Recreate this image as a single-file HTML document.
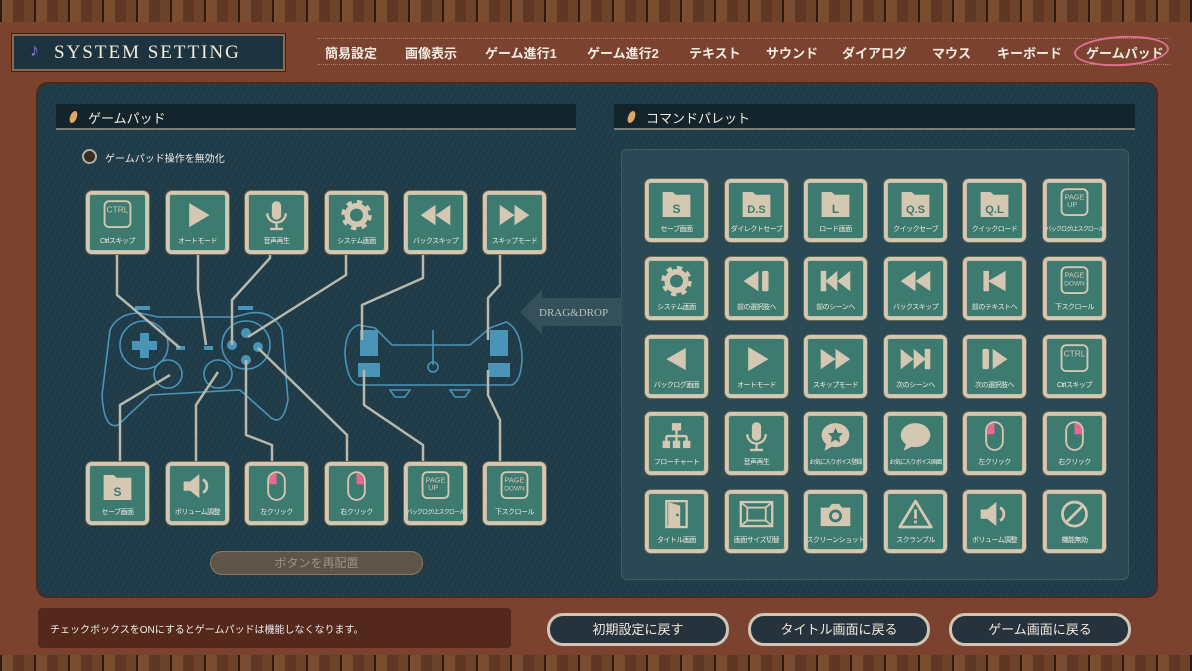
<!DOCTYPE html>
<html><head><meta charset="utf-8">
<style>
*{margin:0;padding:0;box-sizing:border-box}
body{width:1192px;height:671px;overflow:hidden;background:#7b4230;font-family:"Liberation Sans","Noto Sans CJK JP",sans-serif;position:relative}
.wood{position:absolute;left:0;width:1192px;background:repeating-linear-gradient(90deg,#2e1a10 0 2px,#7a4c30 2px 13px,#5e3822 13px 24px,#6c4229 24px 34px);}
.abs{position:absolute}
.title{left:12px;top:34px;width:273px;height:37px;background:#1d3440;border:2px solid #8a6a48;box-shadow:0 0 0 1px #3a2418;color:#f2ece0;font-family:"Liberation Serif",serif;font-size:19px;letter-spacing:2px;padding:6px 0 0 40px}
.nav{top:43px;font-size:13px;font-weight:bold;color:#f4ece2;white-space:nowrap}
.dot{left:318px;width:852px;height:0;border-top:1px dotted #b07a64}
.panel{left:38px;top:84px;width:1118px;height:512px;background:repeating-linear-gradient(120deg,#1f3b47 0 3px,#223f4b 3px 5px);border-radius:10px;box-shadow:0 0 0 2px #4a2a1e}
.hdr{height:26px;background:#14242c;color:#f0ebe0;font-size:13px;padding:4px 0 0 32px;border-bottom:2px solid #76807a}
.hdr i{position:absolute;left:14px;top:7px;width:7px;height:12px;background:#e3a66a;border-radius:50%;transform:skewX(-15deg)}
.pal{left:621px;top:149px;width:508px;height:431px;background:#2a4954;border:1px solid #3d5c66;border-radius:6px}
.b{position:absolute;width:63px;height:63px;background:#3d7a70;border:3px solid #d4c8b2;border-radius:6px;box-shadow:0 0 0 1px #6a6a5a,inset 0 0 0 1px #c8bca6}
.b svg{position:absolute;left:10px;top:4px;width:37px;height:36px}
.b span{position:absolute;left:-4px;right:-4px;top:42px;text-align:center;font-size:7px;color:#f0ebe2;white-space:nowrap;letter-spacing:-.5px}
.b span.s{font-size:6px;letter-spacing:-.8px}
.btm{top:613px;width:182px;height:33px;background:#26323c;border:3px solid #cfc6b6;border-radius:16px;color:#f0ebe0;font-size:13px;text-align:center;line-height:27px}
</style></head><body>
<div class="wood abs" style="top:0;height:22px"></div>
<div class="wood abs" style="top:655px;height:16px"></div>
<div class="abs title">SYSTEM SETTING<span style="position:absolute;left:16px;top:4px;font-size:18px;color:#8a7ad8">♪</span></div>
<div class="abs dot" style="top:38px"></div><div class="abs dot" style="top:64px"></div>
<div class="abs nav" style="left:325px">簡易設定</div>
<div class="abs nav" style="left:405px">画像表示</div>
<div class="abs nav" style="left:485px">ゲーム進行1</div>
<div class="abs nav" style="left:587px">ゲーム進行2</div>
<div class="abs nav" style="left:689px">テキスト</div>
<div class="abs nav" style="left:766px">サウンド</div>
<div class="abs nav" style="left:842px">ダイアログ</div>
<div class="abs nav" style="left:932px">マウス</div>
<div class="abs nav" style="left:997px">キーボード</div>
<div class="abs nav" style="left:1086px">ゲームパッド</div>
<div class="abs" style="left:1074px;top:36px;width:95px;height:30px;border:2px solid #e07090;border-radius:50%;transform:rotate(-3deg)"></div>

<div class="abs panel"></div>
<div class="abs hdr" style="left:56px;top:104px;width:520px"><i></i>ゲームパッド</div>
<div class="abs hdr" style="left:614px;top:104px;width:521px"><i></i>コマンドパレット</div>
<div class="abs" style="left:82px;top:149px;width:15px;height:15px;border-radius:50%;background:#3a2a24;border:2px solid #b0b0a0"></div>
<div class="abs" style="left:105px;top:150px;font-size:10px;color:#eee">ゲームパッド操作を無効化</div>
<div class="abs pal"></div>

<svg class="abs" style="left:520px;top:290px" width="102" height="44"><polygon points="0,22 22,0 22,8 102,8 102,36 22,36 22,44" fill="#34505a"/><text x="19" y="26" font-family="Liberation Serif,serif" font-size="11" fill="#b8c0c0">DRAG&amp;DROP</text></svg>

<svg class="abs" style="left:0;top:0" width="1192" height="671">
<g fill="none" stroke="#4a94b8" stroke-width="1.6">
<path d="M140,313 Q118,313 110,330 L102,395 Q104,430 118,425 L150,395 L240,390 L268,415 Q282,430 288,400 L282,330 Q272,310 250,313 L234,317 L158,317 Z"/>
<circle cx="144" cy="345" r="24"/><circle cx="168" cy="374" r="14"/><circle cx="218" cy="374" r="14"/><circle cx="246" cy="345" r="24"/>
<path d="M358,325 Q345,330 345,355 Q348,385 360,385 L512,385 Q522,380 522,355 Q520,328 506,322 L490,328 L470,345 L392,345 L375,328 Z"/>
<path d="M390,390 L410,390 L405,397 L395,397 Z M450,390 L470,390 L465,397 L455,397 Z"/>
<path d="M433,330 L433,365"/><circle cx="433" cy="367" r="5"/>
</g>
<g fill="#4a94b8">
<path d="M140,333h9v8h8v9h-8v8h-9v-8h-8v-9h8z"/>
<rect x="176" y="346" width="9" height="4"/><rect x="204" y="346" width="9" height="4"/>
<circle cx="232" cy="345" r="5"/><circle cx="246" cy="333" r="5"/><circle cx="258" cy="347" r="5"/><circle cx="246" cy="360" r="5"/>
<rect x="135" y="306" width="15" height="4"/><rect x="238" y="306" width="15" height="4"/>
<rect x="360" y="330" width="18" height="26"/><rect x="490" y="330" width="18" height="26"/>
<rect x="358" y="363" width="22" height="14"/><rect x="488" y="363" width="22" height="14"/>
</g>
<g fill="none" stroke="#b8b8ac" stroke-width="2.5" stroke-linejoin="round">
<path d="M117,254V295L180,348"/><path d="M198,254V290L206,345"/><path d="M270,254V258L232,300V345"/>
<path d="M346,254V275L248,337"/><path d="M423,254V278L362,305V340"/><path d="M500,254V285L488,298V340"/>
<path d="M120,462V405L170,375"/><path d="M196,462V405L218,372"/><path d="M272,462V445L246,435V360"/>
<path d="M347,462V435L258,348"/><path d="M423,462V445L364,405V370"/><path d="M500,462V420L488,395V370"/>
</g>
</svg>

<div class="b" style="left:86px;top:191px"><svg viewBox="0 0 40 36"><rect x="6" y="2" width="28" height="28" rx="5" fill="none" stroke="#d4c8b2" stroke-width="2"/><text x="20" y="14" font-size="9" fill="#d4c8b2" text-anchor="middle">CTRL</text></svg><span>Ctrlスキップ</span></div>
<div class="b" style="left:166px;top:191px"><svg viewBox="0 0 40 36"><polygon points="11,4 33,17 11,30" fill="#d4c8b2"/></svg><span>オートモード</span></div>
<div class="b" style="left:245px;top:191px"><svg viewBox="0 0 40 36"><rect x="15" y="2" width="10" height="20" rx="5" fill="#d4c8b2"/><path d="M10,15a10,10 0 0 0 20,0M20,25v6M13,32h14" stroke="#d4c8b2" stroke-width="2.5" fill="none"/></svg><span>音声再生</span></div>
<div class="b" style="left:325px;top:191px"><svg viewBox="0 0 40 36"><circle cx="20" cy="17" r="10" fill="none" stroke="#d4c8b2" stroke-width="6"/><circle cx="20" cy="17" r="14" fill="none" stroke="#d4c8b2" stroke-width="5" stroke-dasharray="5.5 5.5"/></svg><span>システム画面</span></div>
<div class="b" style="left:404px;top:191px"><svg viewBox="0 0 40 36"><polygon points="20,6 20,28 4,17" fill="#d4c8b2"/><polygon points="36,6 36,28 20,17" fill="#d4c8b2"/></svg><span>バックスキップ</span></div>
<div class="b" style="left:483px;top:191px"><svg viewBox="0 0 40 36"><polygon points="4,6 4,28 20,17" fill="#d4c8b2"/><polygon points="20,6 20,28 36,17" fill="#d4c8b2"/></svg><span>スキップモード</span></div>
<div class="b" style="left:86px;top:462px"><svg viewBox="0 0 40 36"><path d="M5,5h11l3,3h16v24h-30z" fill="#d4c8b2"/><text x="20" y="28" font-size="13" font-weight="bold" fill="#3d7a70" text-anchor="middle">S</text></svg><span>セーブ画面</span></div>
<div class="b" style="left:166px;top:462px"><svg viewBox="0 0 40 36"><polygon points="5,12 12,12 22,4 22,30 12,22 5,22" fill="#d4c8b2"/><path d="M26,10a8,8 0 0 1 0,14" stroke="#d4c8b2" stroke-width="3" fill="none"/></svg><span>ボリューム調整</span></div>
<div class="b" style="left:245px;top:462px"><svg viewBox="0 0 40 36"><rect x="11" y="2" width="18" height="30" rx="9" fill="none" stroke="#d4c8b2" stroke-width="2"/><path d="M12,11a8,9 0 0 1 8,-8v12h-8z" fill="#e86890"/></svg><span>左クリック</span></div>
<div class="b" style="left:325px;top:462px"><svg viewBox="0 0 40 36"><rect x="11" y="2" width="18" height="30" rx="9" fill="none" stroke="#d4c8b2" stroke-width="2"/><path d="M28,11a8,9 0 0 0 -8,-8v12h8z" fill="#e86890"/></svg><span>右クリック</span></div>
<div class="b" style="left:404px;top:462px"><svg viewBox="0 0 40 36"><rect x="6" y="2" width="28" height="28" rx="5" fill="none" stroke="#d4c8b2" stroke-width="2"/><text x="20" y="13" font-size="8" fill="#d4c8b2" text-anchor="middle">PAGE</text><text x="12" y="21" font-size="8" fill="#d4c8b2">UP</text></svg><span class="s">バックログ/上スクロール</span></div>
<div class="b" style="left:483px;top:462px"><svg viewBox="0 0 40 36"><rect x="6" y="2" width="28" height="28" rx="5" fill="none" stroke="#d4c8b2" stroke-width="2"/><text x="20" y="13" font-size="8" fill="#d4c8b2" text-anchor="middle">PAGE</text><text x="20" y="22" font-size="7" fill="#d4c8b2" text-anchor="middle">DOWN</text></svg><span>下スクロール</span></div>

<div class="abs" style="left:210px;top:551px;width:213px;height:24px;background:#5e5448;border:1px solid #8a7a62;border-radius:12px;color:#9a9488;font-size:12px;text-align:center;line-height:22px">ボタンを再配置</div>

<div class="b" style="left:645px;top:179px"><svg viewBox="0 0 40 36"><path d="M5,5h11l3,3h16v24h-30z" fill="#d4c8b2"/><text x="20" y="28" font-size="13" font-weight="bold" fill="#3d7a70" text-anchor="middle">S</text></svg><span>セーブ画面</span></div>
<div class="b" style="left:725px;top:179px"><svg viewBox="0 0 40 36"><path d="M5,5h11l3,3h16v24h-30z" fill="#d4c8b2"/><text x="20" y="28" font-size="12" font-weight="bold" fill="#3d7a70" text-anchor="middle">D.S</text></svg><span>ダイレクトセーブ</span></div>
<div class="b" style="left:804px;top:179px"><svg viewBox="0 0 40 36"><path d="M5,5h11l3,3h16v24h-30z" fill="#d4c8b2"/><text x="20" y="28" font-size="13" font-weight="bold" fill="#3d7a70" text-anchor="middle">L</text></svg><span>ロード画面</span></div>
<div class="b" style="left:884px;top:179px"><svg viewBox="0 0 40 36"><path d="M5,5h11l3,3h16v24h-30z" fill="#d4c8b2"/><text x="20" y="28" font-size="12" font-weight="bold" fill="#3d7a70" text-anchor="middle">Q.S</text></svg><span>クイックセーブ</span></div>
<div class="b" style="left:963px;top:179px"><svg viewBox="0 0 40 36"><path d="M5,5h11l3,3h16v24h-30z" fill="#d4c8b2"/><text x="20" y="28" font-size="12" font-weight="bold" fill="#3d7a70" text-anchor="middle">Q.L</text></svg><span>クイックロード</span></div>
<div class="b" style="left:1043px;top:179px"><svg viewBox="0 0 40 36"><rect x="6" y="2" width="28" height="28" rx="5" fill="none" stroke="#d4c8b2" stroke-width="2"/><text x="20" y="13" font-size="8" fill="#d4c8b2" text-anchor="middle">PAGE</text><text x="12" y="21" font-size="8" fill="#d4c8b2">UP</text></svg><span class="s">バックログ/上スクロール</span></div>
<div class="b" style="left:645px;top:257px"><svg viewBox="0 0 40 36"><circle cx="20" cy="17" r="10" fill="none" stroke="#d4c8b2" stroke-width="6"/><circle cx="20" cy="17" r="14" fill="none" stroke="#d4c8b2" stroke-width="5" stroke-dasharray="5.5 5.5"/></svg><span>システム画面</span></div>
<div class="b" style="left:725px;top:257px"><svg viewBox="0 0 40 36"><polygon points="22,6 22,28 6,17" fill="#d4c8b2"/><rect x="26" y="6" width="7" height="22" rx="2" fill="#d4c8b2"/></svg><span>前の選択肢へ</span></div>
<div class="b" style="left:804px;top:257px"><svg viewBox="0 0 40 36"><rect x="4" y="6" width="6" height="22" fill="#d4c8b2"/><polygon points="22,6 22,28 9,17" fill="#d4c8b2"/><polygon points="36,6 36,28 22,17" fill="#d4c8b2"/></svg><span>前のシーンへ</span></div>
<div class="b" style="left:884px;top:257px"><svg viewBox="0 0 40 36"><polygon points="20,6 20,28 4,17" fill="#d4c8b2"/><polygon points="36,6 36,28 20,17" fill="#d4c8b2"/></svg><span>バックスキップ</span></div>
<div class="b" style="left:963px;top:257px"><svg viewBox="0 0 40 36"><rect x="8" y="6" width="6" height="22" fill="#d4c8b2"/><polygon points="32,6 32,28 13,17" fill="#d4c8b2"/></svg><span>前のテキストへ</span></div>
<div class="b" style="left:1043px;top:257px"><svg viewBox="0 0 40 36"><rect x="6" y="2" width="28" height="28" rx="5" fill="none" stroke="#d4c8b2" stroke-width="2"/><text x="20" y="13" font-size="8" fill="#d4c8b2" text-anchor="middle">PAGE</text><text x="20" y="22" font-size="7" fill="#d4c8b2" text-anchor="middle">DOWN</text></svg><span>下スクロール</span></div>
<div class="b" style="left:645px;top:335px"><svg viewBox="0 0 40 36"><polygon points="30,5 30,29 9,17" fill="#d4c8b2"/></svg><span>バックログ画面</span></div>
<div class="b" style="left:725px;top:335px"><svg viewBox="0 0 40 36"><polygon points="11,4 33,17 11,30" fill="#d4c8b2"/></svg><span>オートモード</span></div>
<div class="b" style="left:804px;top:335px"><svg viewBox="0 0 40 36"><polygon points="4,6 4,28 20,17" fill="#d4c8b2"/><polygon points="20,6 20,28 36,17" fill="#d4c8b2"/></svg><span>スキップモード</span></div>
<div class="b" style="left:884px;top:335px"><svg viewBox="0 0 40 36"><polygon points="4,6 4,28 18,17" fill="#d4c8b2"/><polygon points="18,6 18,28 31,17" fill="#d4c8b2"/><rect x="30" y="6" width="6" height="22" fill="#d4c8b2"/></svg><span>次のシーンへ</span></div>
<div class="b" style="left:963px;top:335px"><svg viewBox="0 0 40 36"><rect x="7" y="6" width="7" height="22" rx="2" fill="#d4c8b2"/><polygon points="18,6 18,28 34,17" fill="#d4c8b2"/></svg><span>次の選択肢へ</span></div>
<div class="b" style="left:1043px;top:335px"><svg viewBox="0 0 40 36"><rect x="6" y="2" width="28" height="28" rx="5" fill="none" stroke="#d4c8b2" stroke-width="2"/><text x="20" y="14" font-size="9" fill="#d4c8b2" text-anchor="middle">CTRL</text></svg><span>Ctrlスキップ</span></div>
<div class="b" style="left:645px;top:412px"><svg viewBox="0 0 40 36"><rect x="15" y="3" width="10" height="8" fill="#d4c8b2"/><path d="M20,11v6M9,17h22M9,17v6M20,17v6M31,17v6" stroke="#d4c8b2" stroke-width="2.5" fill="none"/><rect x="5" y="22" width="8" height="8" fill="#d4c8b2"/><rect x="16" y="22" width="8" height="8" fill="#d4c8b2"/><rect x="27" y="22" width="8" height="8" fill="#d4c8b2"/></svg><span>フローチャート</span></div>
<div class="b" style="left:725px;top:412px"><svg viewBox="0 0 40 36"><rect x="15" y="2" width="10" height="20" rx="5" fill="#d4c8b2"/><path d="M10,15a10,10 0 0 0 20,0M20,25v6M13,32h14" stroke="#d4c8b2" stroke-width="2.5" fill="none"/></svg><span>音声再生</span></div>
<div class="b" style="left:804px;top:412px"><svg viewBox="0 0 40 36"><ellipse cx="20" cy="16" rx="15" ry="13" fill="#d4c8b2"/><polygon points="10,25 8,33 17,28" fill="#d4c8b2"/><polygon points="20,8 22.5,13.5 28,14 24,18 25,24 20,21 15,24 16,18 12,14 17.5,13.5" fill="#3d7a70"/></svg><span class="s">お気に入りボイス登録</span></div>
<div class="b" style="left:884px;top:412px"><svg viewBox="0 0 40 36"><ellipse cx="20" cy="16" rx="16" ry="13" fill="#d4c8b2"/><polygon points="10,25 7,33 17,28" fill="#d4c8b2"/></svg><span class="s">お気に入りボイス画面</span></div>
<div class="b" style="left:963px;top:412px"><svg viewBox="0 0 40 36"><rect x="11" y="2" width="18" height="30" rx="9" fill="none" stroke="#d4c8b2" stroke-width="2"/><path d="M12,11a8,9 0 0 1 8,-8v12h-8z" fill="#e86890"/></svg><span>左クリック</span></div>
<div class="b" style="left:1043px;top:412px"><svg viewBox="0 0 40 36"><rect x="11" y="2" width="18" height="30" rx="9" fill="none" stroke="#d4c8b2" stroke-width="2"/><path d="M28,11a8,9 0 0 0 -8,-8v12h8z" fill="#e86890"/></svg><span>右クリック</span></div>
<div class="b" style="left:645px;top:490px"><svg viewBox="0 0 40 36"><rect x="9" y="3" width="22" height="28" fill="none" stroke="#d4c8b2" stroke-width="2.5"/><polygon points="11,4 24,8 24,30 11,30" fill="#d4c8b2"/><circle cx="21" cy="18" r="1.5" fill="#3d7a70"/></svg><span>タイトル画面</span></div>
<div class="b" style="left:725px;top:490px"><svg viewBox="0 0 40 36"><rect x="3" y="4" width="34" height="26" fill="none" stroke="#d4c8b2" stroke-width="2.5"/><rect x="10" y="10" width="20" height="14" fill="none" stroke="#d4c8b2" stroke-width="2"/><path d="M4,5l6,5M36,5l-6,5M4,29l6,-5M36,29l-6,-5" stroke="#d4c8b2" stroke-width="2"/></svg><span>画面サイズ切替</span></div>
<div class="b" style="left:804px;top:490px"><svg viewBox="0 0 40 36"><path d="M4,10h9l3,-4h8l3,4h9v20h-32z" fill="#d4c8b2"/><circle cx="20" cy="19" r="7" fill="#3d7a70"/><circle cx="20" cy="19" r="4" fill="#d4c8b2"/></svg><span>スクリーンショット</span></div>
<div class="b" style="left:884px;top:490px"><svg viewBox="0 0 40 36"><polygon points="20,3 37,31 3,31" fill="none" stroke="#d4c8b2" stroke-width="3" stroke-linejoin="round"/><rect x="18.5" y="12" width="3" height="10" fill="#d4c8b2"/><rect x="18.5" y="24" width="3" height="3" fill="#d4c8b2"/></svg><span>スクランブル</span></div>
<div class="b" style="left:963px;top:490px"><svg viewBox="0 0 40 36"><polygon points="5,12 12,12 22,4 22,30 12,22 5,22" fill="#d4c8b2"/><path d="M26,10a8,8 0 0 1 0,14" stroke="#d4c8b2" stroke-width="3" fill="none"/></svg><span>ボリューム調整</span></div>
<div class="b" style="left:1043px;top:490px"><svg viewBox="0 0 40 36"><circle cx="20" cy="17" r="13" fill="none" stroke="#d4c8b2" stroke-width="3"/><path d="M11,26L29,8" stroke="#d4c8b2" stroke-width="3"/></svg><span>機能無効</span></div>

<div class="abs" style="left:38px;top:608px;width:473px;height:40px;background:#54281b;border-radius:4px;color:#eee;font-size:10px;padding:13px 0 0 12px">チェックボックスをONにするとゲームパッドは機能しなくなります。</div>
<div class="abs btm" style="left:547px">初期設定に戻す</div>
<div class="abs btm" style="left:748px">タイトル画面に戻る</div>
<div class="abs btm" style="left:949px">ゲーム画面に戻る</div>
</body></html>
